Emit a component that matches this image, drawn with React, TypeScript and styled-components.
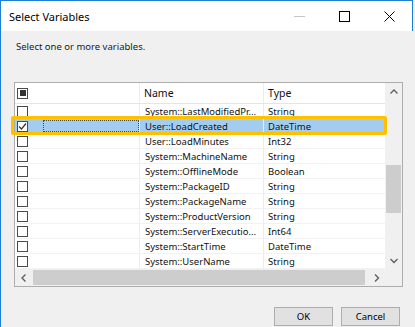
import React from "react";
import styled, { createGlobalStyle } from "styled-components";

type Variable = {
    name: string;
    type: string;
    checked?: boolean;
    selected?: boolean;
}

const VARIABLES: Variable[] = [
    { name: "System::LastModifiedPr...", type: "String" },
    { name: "User::LoadCreated", type: "DateTime", checked: true, selected: true },
    { name: "User::LoadMinutes", type: "Int32" },
    { name: "System::MachineName", type: "String" },
    { name: "System::OfflineMode", type: "Boolean" },
    { name: "System::PackageID", type: "String" },
    { name: "System::PackageName", type: "String" },
    { name: "System::ProductVersion", type: "String" },
    { name: "System::ServerExecutio...", type: "Int64" },
    { name: "System::StartTime", type: "DateTime" },
    { name: "System::UserName", type: "String" },
]

const BLUE = "#1c7ed6"

const GlobalStyle = createGlobalStyle`
    html, body {
        margin: 0;
        padding: 0;
        background: #f0f0f0;
    }
    body {
        font-family: "Noto Sans", "Open Sans", sans-serif;
        color: #000;
    }
`

const Chevron = ({ dir }: { dir: "up" | "down" | "left" | "right" }) => {
    const points = {
        up: "0.5,4.5 4,1 7.5,4.5",
        down: "0.5,1 4,4.5 7.5,1",
        left: "4.5,0.5 1,4 4.5,7.5",
        right: "1,0.5 4.5,4 1,7.5",
    }[dir]
    const vertical = dir === "up" || dir === "down"
    return (
        <svg width={vertical ? 8 : 6} height={vertical ? 6 : 8}>
            <polyline points={points} fill="none" stroke="#606060" strokeWidth="1.4" />
        </svg>
    )
}

const App = (): JSX.Element => {
    return (
        <>
            <GlobalStyle />
            <Window>
                <TitleBar>
                    <Title>Select Variables</Title>
                    <CaptionButton>
                        <svg width="11" height="11"><line x1="0" y1="5.5" x2="11" y2="5.5" stroke="#c4c4c4" /></svg>
                    </CaptionButton>
                    <CaptionButton>
                        <svg width="11" height="11"><rect x="0.5" y="0.5" width="10" height="10" fill="none" stroke="#000" /></svg>
                    </CaptionButton>
                    <CaptionButton>
                        <svg width="11" height="11">
                            <line x1="0.5" y1="0.5" x2="10.5" y2="10.5" stroke="#000" />
                            <line x1="10.5" y1="0.5" x2="0.5" y2="10.5" stroke="#000" />
                        </svg>
                    </CaptionButton>
                </TitleBar>
                <Body>
                    <Prompt>Select one or more variables.</Prompt>
                    <ListBox>
                        <ListArea>
                            <HeaderRow>
                                <CheckCell>
                                    <CheckBox><Indeterminate /></CheckBox>
                                </CheckCell>
                                <NameCell>Name</NameCell>
                                <TypeCell>Type</TypeCell>
                            </HeaderRow>
                            {VARIABLES.map((v) => (
                                <Row key={v.name} selected={!!v.selected}>
                                    <CheckCell>
                                        <CheckBox>
                                            {v.checked &&
                                                <svg width="9" height="9">
                                                    <polyline points="1,4.5 3.5,7 8,1.5" fill="none" stroke="#333" strokeWidth="1.2" />
                                                </svg>}
                                        </CheckBox>
                                        {v.selected && <FocusRect />}
                                    </CheckCell>
                                    <NameCell>{v.name}</NameCell>
                                    <TypeCell>{v.type}</TypeCell>
                                </Row>
                            ))}
                        </ListArea>
                        <VScroll>
                            <ArrowBox><Chevron dir="up" /></ArrowBox>
                            <VTrack>
                                <VThumb offset={65} />
                            </VTrack>
                            <ArrowBox><Chevron dir="down" /></ArrowBox>
                        </VScroll>
                        <HScroll>
                            <ArrowBox><Chevron dir="left" /></ArrowBox>
                            <HTrack>
                                <HThumb />
                            </HTrack>
                            <ArrowBox><Chevron dir="right" /></ArrowBox>
                        </HScroll>
                        <Corner />
                        <Annotation />
                    </ListBox>
                    <ButtonRow>
                        <DialogButton>OK</DialogButton>
                        <DialogButton>Cancel</DialogButton>
                    </ButtonRow>
                </Body>
            </Window>
        </>
    )
}

export default App

const Window = styled.div`
    width: 413px;
    height: 327px;
    box-sizing: border-box;
    border-left: 1px solid ${BLUE};
    border-top: 1px solid ${BLUE};
    background: #f0f0f0;
    display: flex;
    flex-direction: column;
    overflow: hidden;
`
const TitleBar = styled.div`
    height: 30px;
    flex-shrink: 0;
    display: flex;
    align-items: center;
    background: #fff;
    border-right: 1px solid ${BLUE};
    padding-left: 8px;
`
const Title = styled.div`
    flex: 1;
    font-size: 11px;
    line-height: 14px;
    margin-top: 1px;
`
const CaptionButton = styled.div`
    width: 45px;
    height: 30px;
    display: flex;
    align-items: center;
    justify-content: center;
    svg {
        display: block;
    }
`
const Body = styled.div`
    flex: 1;
    display: flex;
    flex-direction: column;
    padding: 0 10px 0 13px;
`
const Prompt = styled.div`
    margin-top: 10px;
    padding-left: 2px;
    font-size: 9.5px;
    line-height: 12px;
    color: #1a1a1a;
`
const ListBox = styled.div`
    position: relative;
    margin-top: 29px;
    width: 389px;
    height: 205px;
    box-sizing: border-box;
    border: 1px solid #adadad;
    background: #fff;
    display: grid;
    grid-template-columns: 1fr 17px;
    grid-template-rows: 1fr 17px;
`
const ListArea = styled.div`
    overflow: hidden;
    font-size: 9.5px;
    color: #111;
`
const HeaderRow = styled.div`
    display: flex;
    height: 21px;
    box-sizing: border-box;
    border-bottom: 1px solid #e5e5e5;
    align-items: stretch;
`
const Row = styled.div<{ selected: boolean }>`
    display: flex;
    height: 15px;
    box-sizing: border-box;
    border-bottom: 1px solid #f2f2f2;
    background: ${props => props.selected ? "#a2cdf1" : "transparent"};
`
const CheckCell = styled.div`
    width: 125px;
    flex-shrink: 0;
    box-sizing: border-box;
    border-right: 1px solid #ececec;
    display: flex;
    align-items: center;
    padding-left: 2px;
`
const NameCell = styled.div`
    width: 124px;
    flex-shrink: 0;
    box-sizing: border-box;
    border-right: 1px solid #ececec;
    padding-left: 5px;
    display: flex;
    align-items: center;
    white-space: nowrap;
    overflow: hidden;
    ${HeaderRow} & {
        padding-left: 4px;
        font-size: 10.5px;
    }
`
const TypeCell = styled.div`
    flex: 1;
    padding-left: 4px;
    display: flex;
    align-items: center;
    white-space: nowrap;
    ${HeaderRow} & {
        font-size: 10.5px;
    }
`
const CheckBox = styled.div`
    width: 11px;
    height: 11px;
    flex-shrink: 0;
    box-sizing: border-box;
    border: 1px solid #4a4a4a;
    background: #fff;
    display: flex;
    align-items: center;
    justify-content: center;
    svg {
        display: block;
    }
`
const Indeterminate = styled.div`
    width: 6px;
    height: 6px;
    background: #333;
`
const FocusRect = styled.div`
    flex: 1;
    align-self: stretch;
    margin: 1px 0 1px 15px;
    border: 1px dotted #4a4a4a;
`
const VScroll = styled.div`
    grid-row: 1;
    grid-column: 2;
    display: flex;
    flex-direction: column;
    background: #f0f0f0;
`
const HScroll = styled.div`
    grid-row: 2;
    grid-column: 1;
    display: flex;
    background: #f0f0f0;
`
const ArrowBox = styled.div`
    width: 17px;
    height: 17px;
    flex-shrink: 0;
    display: flex;
    align-items: center;
    justify-content: center;
    svg {
        display: block;
    }
`
const VTrack = styled.div`
    flex: 1;
    display: flex;
    flex-direction: column;
    align-items: center;
`
const VThumb = styled.div<{ offset: number }>`
    margin-top: ${props => props.offset}px;
    width: 15px;
    height: 48px;
    background: #cdcdcd;
`
const HTrack = styled.div`
    flex: 1;
    display: flex;
    align-items: center;
`
const HThumb = styled.div`
    margin-left: 1px;
    width: 332px;
    height: 15px;
    background: #cdcdcd;
`
const Corner = styled.div`
    grid-row: 2;
    grid-column: 2;
    background: #f0f0f0;
`
const Annotation = styled.div`
    position: absolute;
    left: -4px;
    top: 33px;
    width: 376px;
    height: 19px;
    box-sizing: border-box;
    border: 3px solid #ffc000;
    border-radius: 2px;
    pointer-events: none;
`
const ButtonRow = styled.div`
    display: flex;
    justify-content: flex-end;
    gap: 8px;
    margin-top: 20px;
    padding-right: 3px;
`
const DialogButton = styled.button`
    width: 59px;
    height: 19px;
    box-sizing: border-box;
    border: 1px solid #adadad;
    background: #e1e1e1;
    font-family: "Noto Sans", "Open Sans", sans-serif;
    font-size: 9.5px;
    color: #000;
    padding: 0;
    display: flex;
    align-items: center;
    justify-content: center;
`
